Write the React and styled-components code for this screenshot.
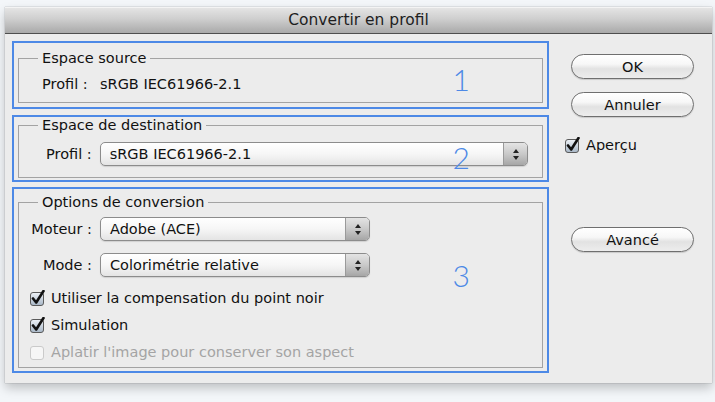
import styled, { createGlobalStyle } from "styled-components";

const GlobalStyle = createGlobalStyle`
  html, body {
    margin: 0;
    padding: 0;
    background: #f3f6f9;
  }
  body {
    font-family: "DejaVu Sans", "Liberation Sans", sans-serif;
    font-size: 14.5px;
    color: #111;
  }
`;

const Page = styled.div`
  width: 715px;
  height: 402px;
  padding: 7px 0 0 5px;
  box-sizing: border-box;
`;

const Window = styled.div`
  width: 707px;
  background: #ececec;
  box-shadow: 0 5px 10px rgba(0, 0, 0, 0.22), 0 0 1px rgba(0, 0, 0, 0.4);
`;

const TitleBar = styled.div`
  height: 26px;
  display: flex;
  align-items: center;
  justify-content: center;
  background: linear-gradient(#e6e6e6 0%, #cfcfcf 45%, #a9a9a9 100%);
  border-bottom: 1px solid #4e4e4e;
  box-shadow: inset 0 1px 0 #f4f4f4;
  font-size: 15.5px;
  color: #1e1e1e;
`;

const Body = styled.div`
  display: flex;
  padding: 7px 0 10px 7px;
`;

const LeftCol = styled.div`
  width: 537px;
  display: flex;
  flex-direction: column;
`;

const Highlight = styled.div`
  position: relative;
  border: 2px solid #4d89e6;
  padding: ${({ $pad }) => $pad};
  margin-bottom: ${({ $gap }) => $gap}px;
`;

const Marker = styled.span`
  position: absolute;
  right: 77px;
  top: ${({ $top }) => $top}px;
  font-family: Lato, "Liberation Sans", sans-serif;
  font-weight: 300;
  font-size: 30px;
  line-height: 1;
  color: #4d89e6;
`;

const Group = styled.fieldset`
  margin: 0;
  padding: ${({ $pad }) => $pad};
  border: 1px solid #a3a3a3;
  border-radius: 0;
  min-width: 0;
`;

const Legend = styled.legend`
  margin-left: 19px;
  padding: 0 4px;
  line-height: 16px;
  color: #111;
`;

const Row = styled.div`
  display: flex;
  align-items: center;
  height: ${({ $h }) => $h || 16}px;
  margin-top: ${({ $mt }) => $mt || 0}px;
  padding-left: ${({ $pl }) => $pl || 0}px;
`;

const Label = styled.span`
  box-sizing: border-box;
  width: ${({ $w }) => $w}px;
  text-align: ${({ $align }) => $align || "right"};
  padding-right: 8px;
  white-space: nowrap;
`;

const Value = styled.span`
  white-space: nowrap;
`;

const Select = styled.div`
  width: ${({ $w }) => $w}px;
  height: 24px;
  box-sizing: border-box;
  display: flex;
  border: 1px solid #8c8c8c;
  border-radius: 5px;
  overflow: hidden;
  background: linear-gradient(#ffffff 0%, #f6f6f6 50%, #e4e4e4 100%);
  box-shadow: 0 1px 1px rgba(0, 0, 0, 0.12);
`;

const SelectText = styled.span`
  flex: 1;
  display: flex;
  align-items: center;
  padding-left: 9px;
  white-space: nowrap;
`;

const Stepper = styled.span`
  width: 23px;
  display: flex;
  align-items: center;
  justify-content: center;
  border-left: 1px solid #9a9a9a;
  background: linear-gradient(#e4e4e4 0%, #c9c9c9 50%, #a6a6a6 100%);
`;

const CheckList = styled.div`
  padding-left: 10px;
  padding-top: 2px;
`;

const Check = styled.label`
  display: flex;
  align-items: center;
  gap: 5px;
  height: 16px;
  margin-top: ${({ $mt }) => $mt || 0}px;
  color: ${({ $disabled }) => ($disabled ? "#a4a4a4" : "#111")};
  white-space: nowrap;
`;

const RightCol = styled.div`
  display: flex;
  flex-direction: column;
  padding-left: 22px;
  padding-top: 13px;
`;

const AquaButton = styled.button`
  width: 123px;
  height: 25px;
  margin-top: ${({ $mt }) => $mt || 0}px;
  border: 1px solid #6f6f6f;
  border-radius: 13px;
  background: linear-gradient(#ffffff 0%, #f7f7f7 40%, #e2e2e2 60%, #ededed 100%);
  box-shadow: inset 0 1px 1px #fff, 0 1px 1px rgba(0, 0, 0, 0.15);
  font-family: inherit;
  font-size: 14.5px;
  color: #111;
  padding: 0;
`;

const SideCheck = styled(Check)`
  margin-left: -7px;
  height: 18px;
`;

const Arrows = () => (
  <svg width="8" height="13" viewBox="0 0 8 13">
    <path d="M4 1 L7 5 L1 5 Z" fill="#222" />
    <path d="M4 12 L7 8 L1 8 Z" fill="#222" />
  </svg>
);

const Box = ({ checked, disabled }) => (
  <svg width="17" height="17" viewBox="0 0 17 17">
    <defs>
      <linearGradient id="cbg" x1="0" y1="0" x2="0" y2="1">
        <stop offset="0" stopColor="#eef2f7" />
        <stop offset="1" stopColor="#a7b6c6" />
      </linearGradient>
    </defs>
    <rect
      x="1.5"
      y="2.5"
      width="13"
      height="13"
      rx="2.5"
      fill={disabled ? "#f6f6f6" : "url(#cbg)"}
      stroke={disabled ? "#cacaca" : "#5a5a5a"}
    />
    {checked && (
      <path
        d="M4 8.5 L7.2 12.5 L14.5 1"
        fill="none"
        stroke="#111"
        strokeWidth="2.6"
        strokeLinecap="round"
        strokeLinejoin="round"
      />
    )}
  </svg>
);

const Dropdown = ({ width, children }) => (
  <Select $w={width}>
    <SelectText>{children}</SelectText>
    <Stepper>
      <Arrows />
    </Stepper>
  </Select>
);

export default function App() {
  return (
    <>
      <GlobalStyle />
      <Page>
        <Window>
          <TitleBar>Convertir en profil</TitleBar>
          <Body>
            <LeftCol>
              <Highlight $pad="7px 4px 4px" $gap={6}>
                <Group $pad="0 0 10px 0">
                  <Legend>Espace source</Legend>
                  <Row $mt={10} $pl={23}>
                    <Label $w={58} $align="left">Profil :</Label>
                    <Value>sRGB IEC61966-2.1</Value>
                  </Row>
                </Group>
                <Marker $top={21}>1</Marker>
              </Highlight>

              <Highlight $pad="0 4px 2px" $gap={5}>
                <Group $pad="0 14px 11px 0">
                  <Legend>Espace de destination</Legend>
                  <Row $h={24} $mt={9}>
                    <Label $w={81}>Profil :</Label>
                    <Dropdown width={430}>sRGB IEC61966-2.1</Dropdown>
                  </Row>
                </Group>
                <Marker $top={25}>2</Marker>
              </Highlight>

              <Highlight $pad="5px 4px 3px" $gap={0}>
                <Group $pad="0 0 7px 0">
                  <Legend>Options de conversion</Legend>
                  <Row $h={24} $mt={7}>
                    <Label $w={81}>Moteur :</Label>
                    <Dropdown width={270}>Adobe (ACE)</Dropdown>
                  </Row>
                  <Row $h={24} $mt={12}>
                    <Label $w={81}>Mode :</Label>
                    <Dropdown width={270}>Colorimétrie relative</Dropdown>
                  </Row>
                  <CheckList>
                    <Check $mt={11}>
                      <Box checked />
                      Utiliser la compensation du point noir
                    </Check>
                    <Check $mt={11}>
                      <Box checked />
                      Simulation
                    </Check>
                    <Check $mt={11} $disabled>
                      <Box disabled />
                      Aplatir l'image pour conserver son aspect
                    </Check>
                  </CheckList>
                </Group>
                <Marker $top={71}>3</Marker>
              </Highlight>
            </LeftCol>

            <RightCol>
              <AquaButton>OK</AquaButton>
              <AquaButton $mt={13}>Annuler</AquaButton>
              <SideCheck $mt={19}>
                <Box checked />
                Aperçu
              </SideCheck>
              <AquaButton $mt={73}>Avancé</AquaButton>
            </RightCol>
          </Body>
        </Window>
      </Page>
    </>
  );
}
